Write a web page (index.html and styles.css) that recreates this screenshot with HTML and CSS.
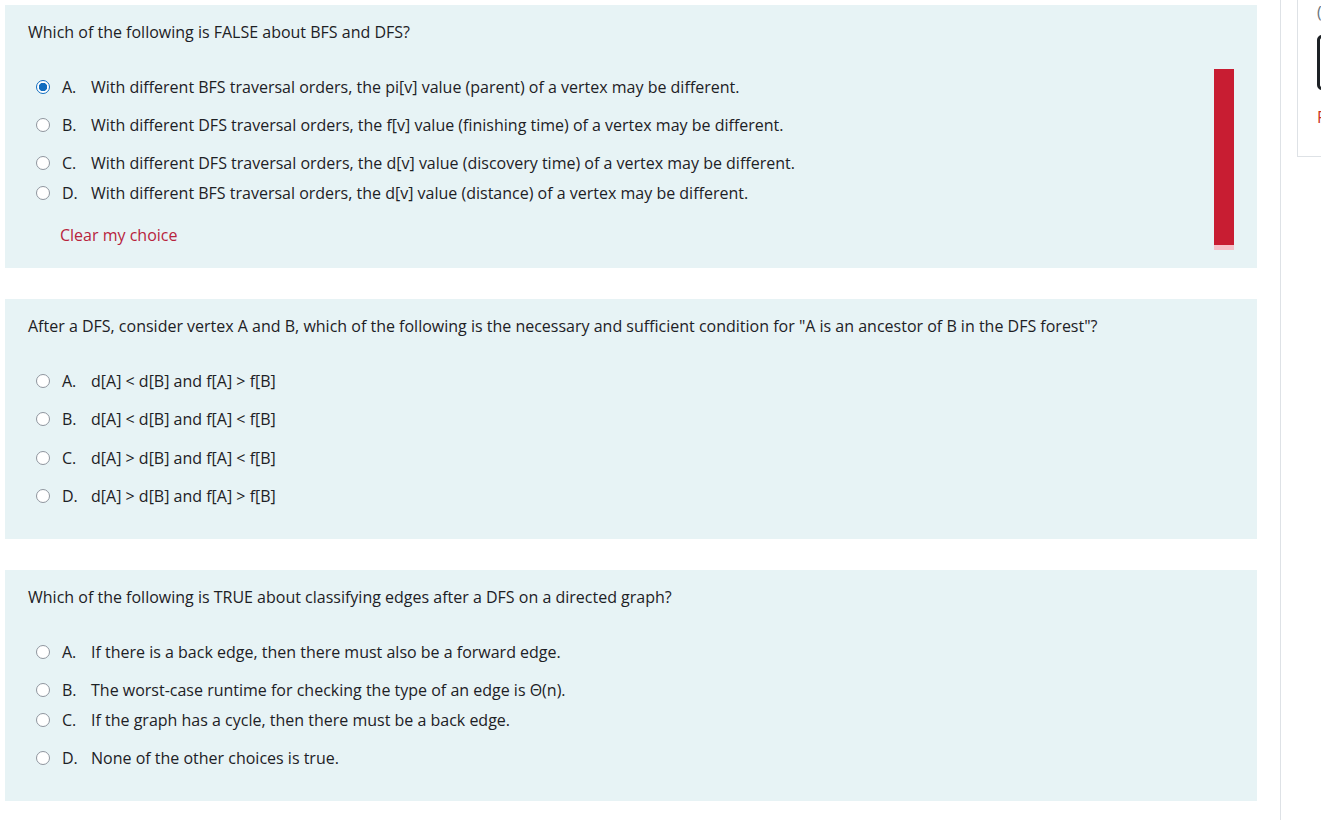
FILE: index.html
```html
<!DOCTYPE html>
<html lang="en">
<head>
  <meta charset="UTF-8">
  <meta name="viewport" content="width=device-width, initial-scale=1.0">
  <link rel="stylesheet" href="styles.css">
  <title>Quiz</title>
</head>
<body>

  <div class="page">
    <div class="main">

      <div class="que">
        <div class="qtext">Which of the following is FALSE about BFS and DFS?</div>
        <div class="answers">
          <div class="option"><span class="radio checked"></span><span class="letter">A.</span><span class="atext">With different BFS traversal orders, the pi[v] value (parent) of a vertex may be different.</span></div>
          <div class="option"><span class="radio"></span><span class="letter">B.</span><span class="atext">With different DFS traversal orders, the f[v] value (finishing time) of a vertex may be different.</span></div>
          <div class="option"><span class="radio"></span><span class="letter">C.</span><span class="atext">With different DFS traversal orders, the d[v] value (discovery time) of a vertex may be different.</span></div>
          <div class="option close"><span class="radio"></span><span class="letter">D.</span><span class="atext">With different BFS traversal orders, the d[v] value (distance) of a vertex may be different.</span></div>
        </div>
        <div class="clear">Clear my choice</div>
        <div class="flag"></div>
      </div>

      <div class="que">
        <div class="qtext">After a DFS, consider vertex A and B, which of the following is the necessary and sufficient condition for "A is an ancestor of B in the DFS forest"?</div>
        <div class="answers">
          <div class="option"><span class="radio"></span><span class="letter">A.</span><span class="atext">d[A] &lt; d[B] and f[A] &gt; f[B]</span></div>
          <div class="option"><span class="radio"></span><span class="letter">B.</span><span class="atext">d[A] &lt; d[B] and f[A] &lt; f[B]</span></div>
          <div class="option wide"><span class="radio"></span><span class="letter">C.</span><span class="atext">d[A] &gt; d[B] and f[A] &lt; f[B]</span></div>
          <div class="option"><span class="radio"></span><span class="letter">D.</span><span class="atext">d[A] &gt; d[B] and f[A] &gt; f[B]</span></div>
        </div>
      </div>

      <div class="que">
        <div class="qtext">Which of the following is TRUE about classifying edges after a DFS on a directed graph?</div>
        <div class="answers">
          <div class="option"><span class="radio"></span><span class="letter">A.</span><span class="atext">If there is a back edge, then there must also be a forward edge.</span></div>
          <div class="option"><span class="radio"></span><span class="letter">B.</span><span class="atext">The worst-case runtime for checking the type of an edge is &Theta;(n).</span></div>
          <div class="option close"><span class="radio"></span><span class="letter">C.</span><span class="atext">If the graph has a cycle, then there must be a back edge.</span></div>
          <div class="option"><span class="radio"></span><span class="letter">D.</span><span class="atext">None of the other choices is true.</span></div>
        </div>
      </div>

    </div>

    <div class="side">
      <div class="navbox">
        <div class="navtitle">(</div>
        <div class="navbtn"></div>
        <div class="navlink">F</div>
      </div>
    </div>
  </div>

</body>
</html>
```

FILE: styles.css
```css
* {
  margin: 0;
  padding: 0;
  box-sizing: border-box;
}

body {
  background-color: #fff;
  color: #1d2125;
  font-family: 'Open Sans', 'Noto Sans', sans-serif;
  font-size: 16px;
  overflow: hidden;
}

.page {
  display: flex;
  width: 1321px;
  height: 820px;
}

.main {
  width: 1281px;
  flex: none;
  border-right: 1px solid #dee2e6;
  padding: 5px 23px 0 5px;
}

.que {
  position: relative;
  background-color: #e7f3f5;
  padding: 15px 23px 21px 23px;
  margin-bottom: 31px;
}

.qtext {
  line-height: 24px;
}

.answers {
  padding: 7px 0 10px 8px;
}

.option {
  display: flex;
  align-items: center;
  line-height: 24px;
  margin-top: 14px;
}

.option:first-child {
  margin-top: 24px;
}

.option.close {
  margin-top: 6px;
}

.option.wide {
  margin-top: 15px;
}

.radio {
  width: 14px;
  height: 14px;
  border: 1px solid #8f959e;
  border-radius: 50%;
  background: #fff;
  flex: none;
}

.radio.checked {
  border: 1px solid #0f6cbf;
  background: radial-gradient(circle, #0f6cbf 0 4px, #fff 4.5px);
}

.letter {
  width: 29px;
  margin-left: 12px;
  flex: none;
}

.clear {
  color: #b8233d;
  line-height: 24px;
  margin: 8px 0 0 32px;
}

.flag {
  position: absolute;
  top: 64px;
  right: 23px;
  width: 20px;
  height: 181px;
  background: #c81d32;
  border-bottom: 5px solid #f6c1c9;
}

.side {
  flex: 1;
  overflow: hidden;
}

.navbox {
  margin-left: 16px;
  width: 300px;
  height: 157px;
  border-left: 1px solid #dee2e6;
  border-bottom: 1px solid #dee2e6;
  padding: 2px 0 0 19px;
}

.navtitle {
  color: #6a737b;
  line-height: 20px;
}

.navbtn {
  margin-top: 13px;
  width: 60px;
  height: 55px;
  border: 3px solid #1d2125;
  border-radius: 5px;
}

.navlink {
  color: #ca3120;
  margin-top: 17px;
  line-height: 20px;
}
```
